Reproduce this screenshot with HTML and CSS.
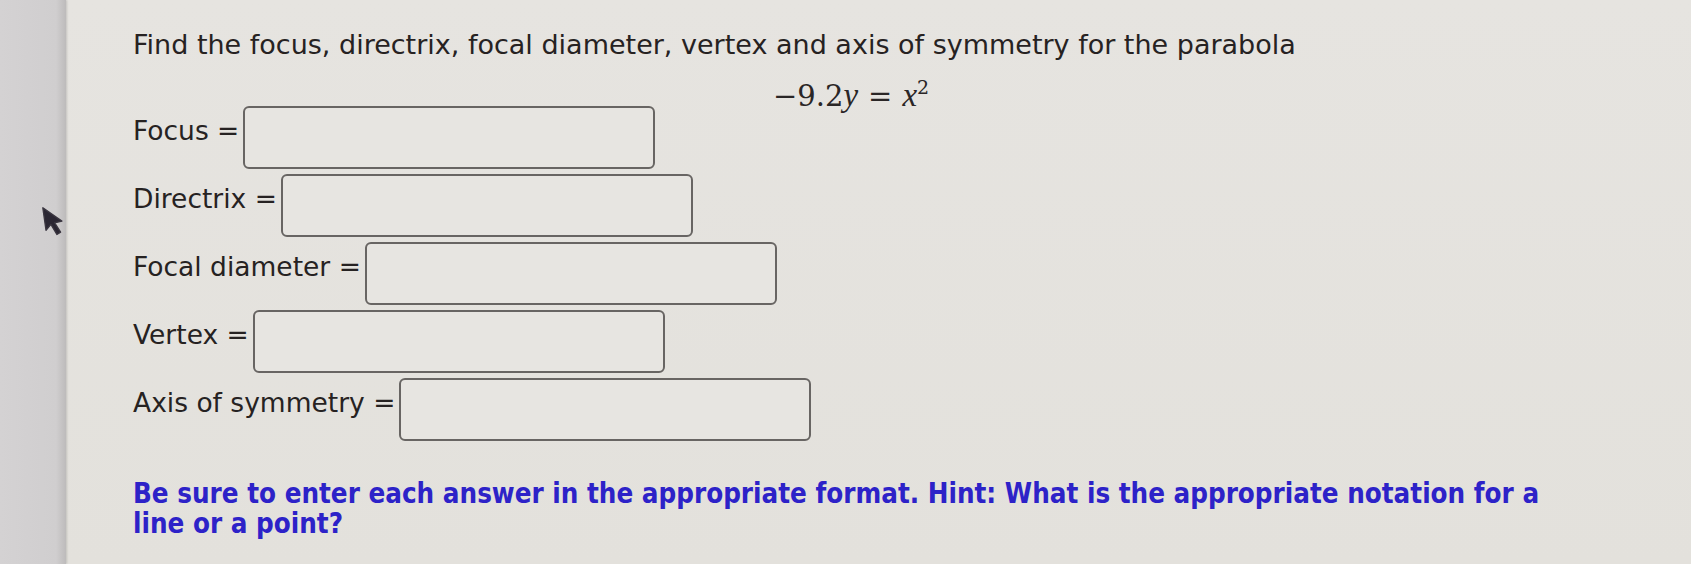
FILE: index.html
```html
<!DOCTYPE html>
<html>
<head>
<meta charset="utf-8">
<link rel="stylesheet" href="styles.css">
</head>
<body>
<div class="screen">
  <div class="side">
    <svg class="cursor" width="26" height="34" viewBox="0 0 22 30">
      <path d="M2 2 L2 22 L7 17.5 L11 27 L14.5 25.5 L10.5 16.5 L17 16 Z" fill="#2b2733" stroke="#3a3640" stroke-width="1.2" stroke-linejoin="round"/>
    </svg>
  </div>
  <div class="main">
    <p class="title">Find the focus, directrix, focal diameter, vertex and axis of symmetry for the parabola</p>
    <div class="eq"><span class="num">−9.2</span><i>y</i><span class="op">=</span><i>x</i><sup>2</sup></div>
    <div class="rows">
      <div class="row"><span class="label">Focus =</span><div class="box"></div></div>
      <div class="row"><span class="label">Directrix =</span><div class="box"></div></div>
      <div class="row"><span class="label">Focal diameter =</span><div class="box"></div></div>
      <div class="row"><span class="label">Vertex =</span><div class="box"></div></div>
      <div class="row"><span class="label">Axis of symmetry =</span><div class="box"></div></div>
    </div>
    <p class="hint">Be sure to enter each answer in the appropriate format. Hint: What is the appropriate notation for a line or a point?</p>
  </div>
</div>
</body>
</html>
```

FILE: styles.css
```css
html, body {
  margin: 0;
  padding: 0;
  width: 1691px;
  height: 564px;
  overflow: hidden;
  background: #e4e2de;
}
.screen {
  display: flex;
  height: 564px;
}
.side {
  width: 66px;
  flex: none;
  background: linear-gradient(90deg, #d4d2d3 0%, #d0cecf 85%, #bdbbbb 100%);
  box-shadow: 1px 0 2px rgba(0,0,0,0.15);
  position: relative;
}
.cursor {
  position: absolute;
  left: 42px;
  top: 204px;
  transform: rotate(-8deg);
}
.main {
  flex: 1;
  padding-left: 67px;
  background: linear-gradient(180deg, #e6e4e0 0%, #e3e1dc 100%);
  color: #262222;
  font-family: "DejaVu Sans", sans-serif;
}
.title {
  margin: 0;
  padding-top: 30px;
  font-size: 27px;
  line-height: 30px;
}
.eq {
  margin: 18px 0 0 640px;
  height: 34px;
  line-height: 34px;
  font-family: "DejaVu Serif", "Liberation Serif", serif;
  font-size: 29px;
  color: #2a2626;
}
.eq .num { font-style: normal; }
.eq i { font-family: "Liberation Serif", serif; font-size: 33px; }
.eq .op { margin: 0 10px; }
.eq sup { font-size: 19px; position: relative; top: -8px; vertical-align: top; }
.rows {
  display: flex;
  flex-direction: column;
  gap: 5px;
  margin-top: -6px;
}
.row {
  display: flex;
  align-items: center;
  gap: 4px;
  height: 63px;
}
.label {
  font-size: 26.5px;
  line-height: 30px;
  padding-bottom: 14px;
}
.box {
  width: 408px;
  height: 59px;
  border: 2px solid #686563;
  border-radius: 6px;
  background: #e7e5e1;
}
.hint {
  margin: 37px 0 0 0;
  font-family: "DejaVu Sans Condensed", "DejaVu Sans", sans-serif;
  font-size: 27.5px;
  line-height: 30px;
  font-weight: bold;
  color: #2d22c8;
  width: 1420px;
}
```
